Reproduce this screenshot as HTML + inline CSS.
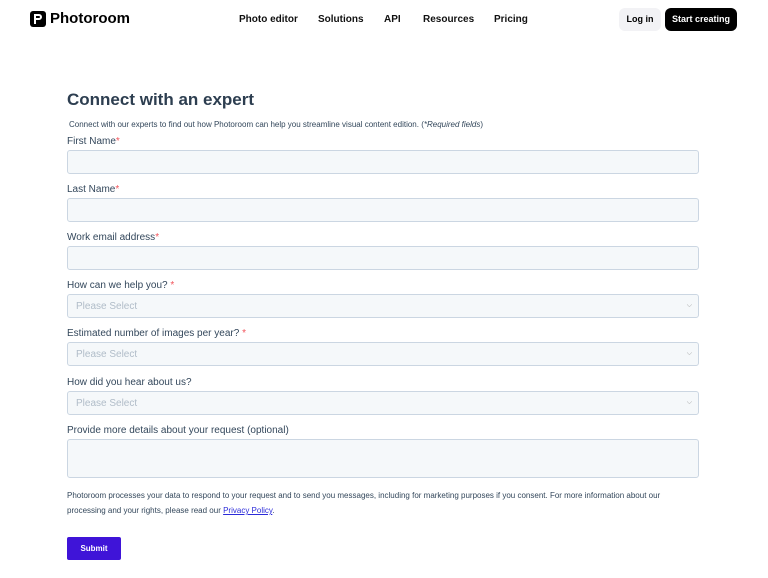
<!DOCTYPE html>
<html><head><meta charset="utf-8"><style>
*{box-sizing:border-box;margin:0;padding:0}
body{width:768px;height:578px;background:#fff;font-family:"Liberation Sans",Arial,sans-serif;position:relative;overflow:hidden;color:#33475b}
.a{position:absolute}
.nav{font-size:10px;color:#111;font-weight:bold;top:14px}
.lbl{left:67px;font-size:10px;color:#33475b}
.lbl b{color:#f2545b;font-weight:normal}
.in{left:67px;width:632px;height:24px;background:#f5f8fa;border:1px solid #cbd6e2;border-radius:3px;font-size:10px;color:#b0bcc8;padding:6px 8px}
.ch{position:absolute;right:6px;top:7px;font-size:7px;color:#999}
</style></head><body>
<div class="a" style="left:30px;top:11px;width:16px;height:16px;background:#000;border-radius:3px"><div style="position:absolute;left:4px;top:3px;width:8px;height:6px;border:2px solid #fff;border-radius:0 3px 3px 0"></div><div style="position:absolute;left:4px;top:3px;width:2px;height:10px;background:#fff"></div></div>
<div class="a" style="left:50px;top:10px;font-size:15px;font-weight:bold;color:#000">Photoroom</div>
<div class="a nav" style="left:239px">Photo editor</div>
<div class="a nav" style="left:318px">Solutions</div>
<div class="a nav" style="left:384px">API</div>
<div class="a nav" style="left:423px">Resources</div>
<div class="a nav" style="left:494px">Pricing</div>
<div class="a" style="left:619px;top:8px;width:42px;height:23px;background:#f2f2f5;border-radius:6px;font-size:9px;font-weight:bold;color:#000;text-align:center;line-height:23px">Log in</div>
<div class="a" style="left:665px;top:8px;width:72px;height:23px;background:#000;border-radius:6px;font-size:9px;font-weight:bold;color:#fff;text-align:center;line-height:23px">Start creating</div>
<div class="a" style="left:67px;top:90px;font-size:17px;font-weight:bold;color:#2d3e50">Connect with an expert</div>
<div class="a" style="left:69px;top:120px;font-size:8px;color:#33475b">Connect with our experts to find out how Photoroom can help you streamline visual content edition. (<i>*Required fields</i>)</div>
<div class="a lbl" style="top:136px">First Name<b>*</b></div>
<div class="a in" style="top:150px"></div>
<div class="a lbl" style="top:184px">Last Name<b>*</b></div>
<div class="a in" style="top:198px"></div>
<div class="a lbl" style="top:232px">Work email address<b>*</b></div>
<div class="a in" style="top:246px"></div>
<div class="a lbl" style="top:280px">How can we help you? <b>*</b></div>
<div class="a in" style="top:294px">Please Select<span class="ch">&#9013;</span></div>
<div class="a lbl" style="top:328px">Estimated number of images per year? <b>*</b></div>
<div class="a in" style="top:342px">Please Select<span class="ch">&#9013;</span></div>
<div class="a lbl" style="top:377px">How did you hear about us?</div>
<div class="a in" style="top:391px">Please Select<span class="ch">&#9013;</span></div>
<div class="a lbl" style="top:425px">Provide more details about your request (optional)</div>
<div class="a in" style="top:439px;height:39px"></div>
<div class="a" style="left:67px;top:488px;font-size:8px;line-height:15px;color:#33475b;width:622px">Photoroom processes your data to respond to your request and to send you messages, including for marketing purposes if you consent. For more information about our processing and your rights, please read our <span style="color:#2b2bd9;text-decoration:underline">Privacy Policy</span>.</div>
<div class="a" style="left:67px;top:537px;width:54px;height:23px;background:#3f14d8;border-radius:2px;color:#fff;font-size:8px;font-weight:bold;text-align:center;line-height:23px">Submit</div>
</body></html>
